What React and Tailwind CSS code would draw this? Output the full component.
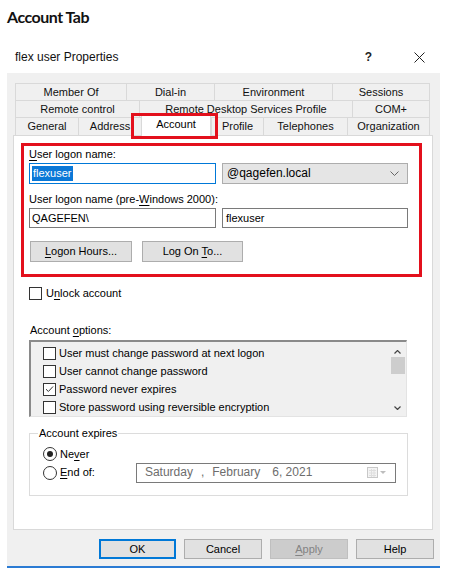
import React from "react";

const U = ({ children }) => <span className="underline underline-offset-[2px]">{children}</span>;

const rows = [
  [
    ["Member Of", "w-[111px]"],
    ["Dial-in", "w-[88px]"],
    ["Environment", "w-[118px]"],
    ["Sessions", "w-[98px]"],
  ],
  [
    ["Remote control", "w-[124px]"],
    ["Remote Desktop Services Profile", "w-[213px]"],
    ["COM+", "w-[78px]"],
  ],
];

const lastRow = [
  ["General", "w-[63px]"],
  ["Address", "w-[63px]"],
  ["Account", "w-[70px]", true],
  ["Profile", "w-[52px]"],
  ["Telephones", "w-[84px]"],
  ["Organization", "w-[83px]"],
];

const options = [
  ["User must change password at next logon", false],
  ["User cannot change password", false],
  ["Password never expires", true],
  ["Store password using reversible encryption", false],
];

function Check({ checked }) {
  return (
    <span className="w-[13px] h-[13px] border border-[#333] bg-white flex items-center justify-center shrink-0">
      {checked && (
        <svg width="9" height="8" viewBox="0 0 9 8">
          <path d="M1 4.2 L3.4 6.5 L8 1.5" fill="none" stroke="#333" strokeWidth="1" />
        </svg>
      )}
    </span>
  );
}

function Radio({ on }) {
  return (
    <span className="w-[14px] h-[14px] rounded-full border border-[#333] bg-white flex items-center justify-center shrink-0">
      {on && <span className="w-[6px] h-[6px] rounded-full bg-[#222]" />}
    </span>
  );
}

function Btn({ children, className = "" }) {
  // wrap text in a span so flex doesn't eat the spaces
  return (
    <div className={"h-full border flex items-center justify-center " + className}>
      <span>{children}</span>
    </div>
  );
}

export default function App() {
  return (
    <div className="w-[450px] h-[580px] bg-white overflow-hidden font-['Liberation_Sans',Arial,sans-serif] text-[11px] leading-[13px] text-black">
      <h1 className="pl-[7px] pt-[7px] h-[40px] font-['Lato',sans-serif] font-bold text-[16px] leading-[20px] tracking-[-0.5px] text-[#111]">
        Account Tab
      </h1>

      {/* window title bar */}
      <div className="mx-[7px] h-[33px] flex items-center pt-[2px]">
        <span className="pl-[8px] text-[12px] text-[#111]">flex user Properties</span>
        <span className="ml-auto mr-[42px] text-[12px] font-bold text-[#222]">?</span>
        <svg className="mr-[18px]" width="11" height="11" viewBox="0 0 11 11">
          <path d="M0.5 0.5 L10.5 10.5 M10.5 0.5 L0.5 10.5" stroke="#222" strokeWidth="1" />
        </svg>
      </div>

      {/* dialog body */}
      <div className="mx-[7px] w-[433px] h-[495px] bg-[#f0f0f0] border-b-2 border-[#2b7bd3] pt-[10px] relative">
        <div className="ml-[8px] w-[415px]">
          {rows.map((row, i) => (
            <div key={i} className="flex h-[17px]">
              {row.map(([label, w]) => (
                <div
                  key={label}
                  className={
                    w +
                    " border-t border-l border-[#d9d9d9] last:border-r flex items-center justify-center text-[#111]"
                  }
                >
                  {label}
                </div>
              ))}
            </div>
          ))}
          <div className="flex h-[18px] items-end">
            {lastRow.map(([label, w, sel]) =>
              sel ? (
                <div
                  key={label}
                  className={
                    w +
                    " relative z-10 h-[21px] -mb-px bg-white border border-b-0 border-[#d9d9d9] flex items-start pt-[2px] justify-center"
                  }
                >
                  {label}
                </div>
              ) : (
                <div
                  key={label}
                  className={
                    w +
                    " h-[18px] border-t border-l border-[#d9d9d9] last:border-r flex items-center justify-center text-[#111]"
                  }
                >
                  {label}
                </div>
              )
            )}
          </div>
        </div>

        {/* red annotation around Account tab */}
        <div className="absolute left-[124px] top-[40px] w-[87px] h-[26px] border-[3px] border-[#e3101c] z-20" />

        {/* tab panel */}
        <div className="ml-[6px] w-[420px] h-[395px] border border-[#d9d9d9] bg-white pt-[7px]">
          <div className="ml-[7px] w-[401px] h-[134px] border-[3px] border-[#e3101c] px-[5px]">
            <div className="mt-[2px] h-[13px]">
              <U>U</U>ser logon name:
            </div>
            <div className="mt-[2px] flex gap-[6px]">
              <div className="w-[187px] h-[21px] border border-[#0078d7] bg-white flex items-center pl-[2px]">
                <span className="bg-[#0a78d7] text-white px-px leading-[15px]">flexuser</span>
              </div>
              <div className="w-[186px] h-[21px] border border-[#adadad] bg-[#e5e5e5] flex items-center pl-[4px] pr-[8px]">
                <span className="text-[12px]">@qagefen.local</span>
                <svg className="ml-auto" width="9" height="5" viewBox="0 0 9 5">
                  <path d="M0.5 0.5 L4.5 4.5 L8.5 0.5" fill="none" stroke="#666" strokeWidth="1" />
                </svg>
              </div>
            </div>
            <div className="mt-[9px] h-[13px]">
              User logon name (pre-<U>W</U>indows 2000):
            </div>
            <div className="mt-[2px] flex gap-[6px]">
              <div className="w-[187px] h-[20px] border border-[#7a7a7a] bg-white flex items-center pl-[2px]">
                QAGEFEN\
              </div>
              <div className="w-[186px] h-[20px] border border-[#7a7a7a] bg-white flex items-center pl-[3px]">
                flexuser
              </div>
            </div>
            <div className="mt-[13px] h-[21px] flex gap-[10px] pl-px">
              <div className="w-[102px]">
                <Btn className="bg-[#e1e1e1] border-[#adadad]">
                  <U>L</U>ogon Hours...
                </Btn>
              </div>
              <div className="w-[101px]">
                <Btn className="bg-[#e1e1e1] border-[#adadad]">
                  Log On <U>T</U>o...
                </Btn>
              </div>
            </div>
          </div>

          <div className="ml-[15px] mt-[10px] flex items-center gap-[4px] h-[13px]">
            <Check />
            <span>
              U<U>n</U>lock account
            </span>
          </div>

          <div className="ml-[16px] mt-[24px] h-[13px]">
            Account <U>o</U>ptions:
          </div>

          <div className="ml-[15px] mt-[3px] w-[378px] h-[77px] bg-[#f0f0f0] border-t-2 border-l-2 border-r border-b border-t-[#8a8a8a] border-l-[#8a8a8a] border-r-[#e3e3e3] border-b-[#e3e3e3] flex">
            <div className="flex-1 pl-[12px] pt-[2px]">
              {options.map(([label, c]) => (
                <div key={label} className="h-[18px] flex items-center gap-[3px]">
                  <Check checked={c} />
                  <span>{label}</span>
                </div>
              ))}
            </div>
            <div className="w-[17px] flex flex-col items-center pt-[8px] pb-[6px]">
              <svg width="7" height="4" viewBox="0 0 7 4">
                <path d="M0.5 3.5 L3.5 0.5 L6.5 3.5" fill="none" stroke="#444" strokeWidth="1.2" />
              </svg>
              <div className="mt-[3px] w-[14px] h-[17px] bg-[#cdcdcd]" />
              <svg className="mt-auto" width="7" height="4" viewBox="0 0 7 4">
                <path d="M0.5 0.5 L3.5 3.5 L6.5 0.5" fill="none" stroke="#444" strokeWidth="1.2" />
              </svg>
            </div>
          </div>

          {/* Account expires group */}
          <div className="ml-[15px] mt-[16px] w-[379px] h-[63px] border border-[#dcdcdc] relative">
            <span className="absolute left-[8px] -top-[7px] bg-white px-px leading-[13px]">Account expires</span>
            <div className="pl-[13px] pt-[13px] flex items-center gap-[3px] h-[27px]">
              <Radio on />
              <span>
                Ne<U>v</U>er
              </span>
            </div>
            <div className="pl-[13px] pt-[2px] flex items-center h-[21px]">
              <Radio />
              <span className="ml-[3px]">
                <U>E</U>nd of:
              </span>
              <div className="ml-[41px] w-[260px] h-[20px] border border-[#7a7a7a] bg-white flex items-center pl-[8px] pr-[8px] text-[12px] text-[#6d6d6d]">
                <span>Saturday</span>
                <span className="ml-[8px]">,</span>
                <span className="ml-[8px]">February</span>
                <span className="ml-[12px]">6, 2021</span>
                <svg className="ml-auto" width="20" height="12" viewBox="0 0 20 12">
                  <rect x="0.5" y="0.5" width="10" height="10" fill="#f4f4f4" stroke="#c8c8c8" />
                  <path d="M2 3.5 H9 M2 6 H9 M2 8.5 H9 M4.5 2 V10 M7 2 V10" stroke="#dedede" strokeWidth="1" />
                  <path d="M13 4 L19 4 L16 7 Z" fill="#bdbdbd" />
                </svg>
              </div>
            </div>
          </div>
        </div>

        {/* dialog buttons */}
        <div className="mt-[9px] h-[20px] flex justify-end gap-[8px] pr-[6px]">
          <div className="w-[77px]">
            <Btn className="bg-[#e1e1e1] border-2 border-[#0078d7]">OK</Btn>
          </div>
          <div className="w-[78px]">
            <Btn className="bg-[#e1e1e1] border-[#adadad]">Cancel</Btn>
          </div>
          <div className="w-[78px]">
            <Btn className="bg-[#cccccc] border-[#bfbfbf] text-[#838383]">
              <U>A</U>pply
            </Btn>
          </div>
          <div className="w-[78px]">
            <Btn className="bg-[#e1e1e1] border-[#adadad]">Help</Btn>
          </div>
        </div>
      </div>
    </div>
  );
}
